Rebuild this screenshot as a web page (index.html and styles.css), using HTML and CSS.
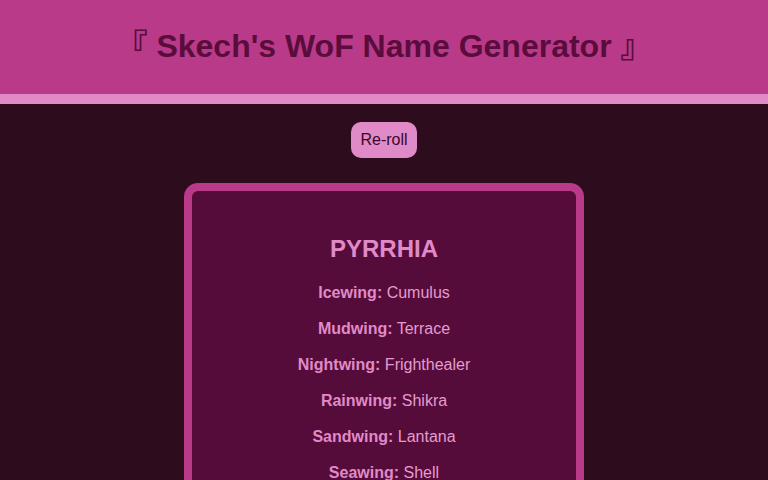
FILE: index.html
```html
<!DOCTYPE html>
<html lang="en">
<head>
    <meta charset="UTF-8">
    <meta name="viewport" content="width=device-width, initial-scale=1.0">
    <title>Skech's WoF Name Generator</title>
    <link rel="stylesheet" href="styles.css">
</head>
<body>

    <header class="header">
        <h1><span class="bracket">『</span> Skech's WoF Name Generator <span class="bracket">』</span></h1>
    </header>

    <div class="controls">
        <button id="reroll">Re-roll</button>
    </div>

    <div class="card">
        <h2 class="card-title">PYRRHIA</h2>
        <p><b>Icewing:</b> Cumulus</p>
        <p><b>Mudwing:</b> Terrace</p>
        <p><b>Nightwing:</b> Frighthealer</p>
        <p><b>Rainwing:</b> Shikra</p>
        <p><b>Sandwing:</b> Lantana</p>
        <p><b>Seawing:</b> Shell</p>
        <p><b>Skywing:</b> Ember</p>
    </div>

</body>
</html>
```

FILE: styles.css
```css
body {
    font-family: "Liberation Sans", Arial, sans-serif;
    background-color: #2d0c1e;
    margin: 0;
    padding: 0;
}

.header {
    background-color: #b83a89;
    border-bottom: 10px solid #e08ac8;
    padding: 28px 0 29px;
    text-align: center;
}

.header h1 {
    margin: 0;
    font-size: 32px;
    line-height: 37px;
    color: #5a0c3c;
}

.bracket {
    font-family: "Noto Sans CJK SC", sans-serif;
    font-weight: 900;
    line-height: 0;
}

.controls {
    display: flex;
    justify-content: center;
    margin: 18px 0 25px;
}

.controls button {
    height: 36px;
    padding: 0 9px;
    font-family: "Liberation Sans", Arial, sans-serif;
    font-size: 16px;
    border: none;
    border-radius: 10px;
    background-color: #e08ac8;
    color: #3a0826;
    cursor: pointer;
}

.card {
    width: 384px;
    margin: 0 auto;
    padding: 24px 0 20px;
    box-sizing: content-box;
    background-color: #560c3a;
    border: 8px solid #b83a89;
    border-radius: 14px;
    text-align: center;
    color: #e49bcf;
}

.card-title {
    font-size: 24px;
    line-height: 28px;
    margin: 20px 0 20px;
    color: #e08ac8;
}

.card p {
    font-size: 16px;
    line-height: 20px;
    margin: 16px 0;
}

.card p:first-of-type {
    margin-top: 0;
}

.card b {
    color: #e08ac8;
}
```
